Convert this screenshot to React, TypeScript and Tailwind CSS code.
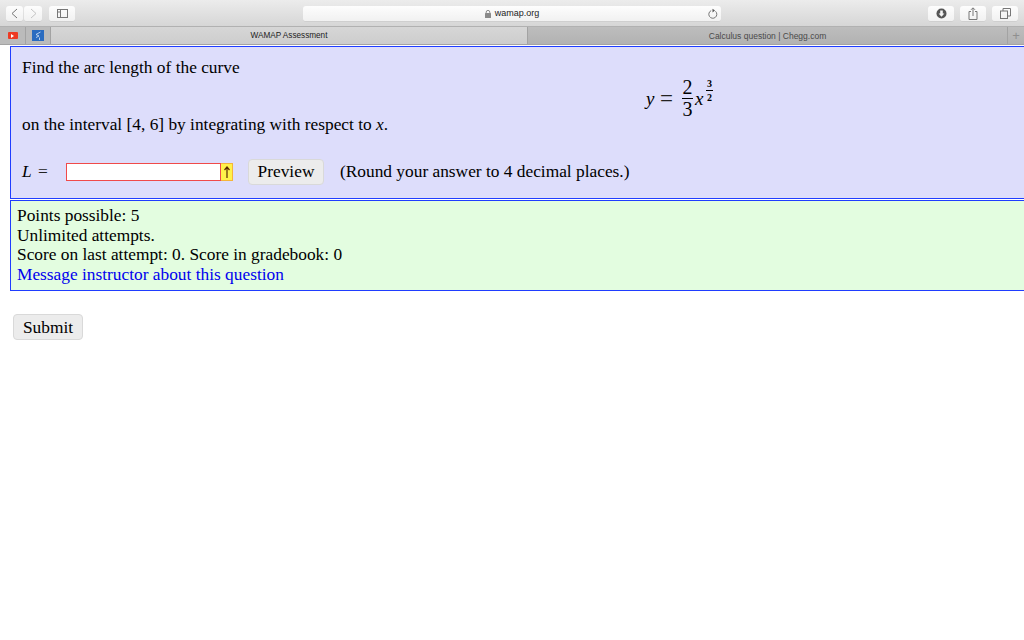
const serif = "font-['Liberation_Serif',serif]";

function NavBtn({ className = "", children }: { className?: string; children?: React.ReactNode }) {
  return (
    <div className={`h-[16px] bg-gradient-to-b from-[#fdfdfd] to-[#f1f1f1] rounded-[3px] border-b border-[#cfcfcf] flex items-center justify-center ${className}`}>
      {children}
    </div>
  );
}

function Toolbar() {
  return (
    <div className="h-[25px] pt-[1px] bg-gradient-to-b from-[#ececec] to-[#d6d6d6] border-b border-[#b1b1b1] flex items-center pl-[6px] pr-[6px] box-content">
      <div className="flex gap-px">
        <NavBtn className="w-[17px]">
          <svg width="7" height="11" viewBox="0 0 7 11" fill="none" stroke="#777" strokeWidth="1"><path d="M6 1 1 5.5 6 10" /></svg>
        </NavBtn>
        <NavBtn className="w-[18px]">
          <svg width="7" height="11" viewBox="0 0 7 11" fill="none" stroke="#c4c4c4" strokeWidth="1"><path d="M1 1 6 5.5 1 10" /></svg>
        </NavBtn>
      </div>
      <NavBtn className="w-[26px] ml-[7px]">
        <svg width="11" height="9" viewBox="0 0 11 9" fill="none" stroke="#777" strokeWidth="1"><rect x=".5" y=".5" width="10" height="8" /><path d="M3.5 .5v8M.5 3h3" /></svg>
      </NavBtn>
      <NavBtn className="w-[418px] ml-[228px] relative">
        <span className="flex items-center gap-[4px] font-['Liberation_Sans',sans-serif] text-[9px] text-[#222] pt-[2px]">
          <svg width="6" height="8" viewBox="0 0 6 8"><path d="M1.2 3.5V2.2a1.8 1.8 0 0 1 3.6 0v1.3" fill="none" stroke="#8a8a8a" /><rect y="3" width="6" height="5" rx=".5" fill="#8a8a8a" /></svg>
          wamap.org
        </span>
        <svg className="absolute right-[2px] top-[2px]" width="12" height="12" viewBox="0 0 12 12" fill="none" stroke="#777" strokeWidth="1">
          <path d="M8.5 3.3A4 4 0 1 1 4.2 2.6" />
          <path d="M5.5 .8 8 2.6 5.5 4.4z" fill="#555" stroke="none" />
        </svg>
      </NavBtn>
      <div className="flex gap-[6px] ml-auto">
        <NavBtn className="w-[26px]">
          <svg width="11" height="11" viewBox="0 0 11 11"><circle cx="5.5" cy="5.5" r="5" fill="#555" /><path d="M4.2 2.5h2.6v3h1.6L5.5 8.7 2.6 5.5h1.6z" fill="#f4f4f4" /></svg>
        </NavBtn>
        <NavBtn className="w-[26px]">
          <svg width="10" height="13" viewBox="0 0 10 13" fill="none" stroke="#777" strokeWidth="1"><path d="M3 4.5H1v8h8v-8H7M5 9V1M3 2.8 5 .8l2 2" /></svg>
        </NavBtn>
        <NavBtn className="w-[26px]">
          <svg width="11" height="11" viewBox="0 0 11 11" fill="none" stroke="#777" strokeWidth="1"><rect x=".5" y="3" width="7" height="7.5" /><path d="M3 3V.5h7.5V8H7.5" /></svg>
        </NavBtn>
      </div>
    </div>
  );
}

function TabBar() {
  return (
    <div className="h-[17px] bg-gradient-to-b from-[#bdbdbd] to-[#b2b2b2] flex border-b border-[#a3a3a3] box-content font-['Liberation_Sans',sans-serif] text-[8.2px]">
      <div className="w-[26px] bg-[#bbbbbb] border-r border-[#a3a3a3] flex items-center justify-center">
        <div className="w-[10px] h-[7px] rounded-[1px] bg-[#ee3a23] flex items-center justify-center">
          <div className="w-0 h-0 border-y-[2px] border-y-transparent border-l-[3px] border-l-white" />
        </div>
      </div>
      <div className="w-[25px] bg-[#bbbbbb] border-r border-[#a3a3a3] flex items-center justify-center">
        <div className="w-[12px] h-[11px] bg-[#2b6cc0] flex items-center justify-center">
          <svg width="8" height="9" viewBox="0 0 8 9" fill="none" stroke="#dbe8f8" strokeWidth=".8"><path d="M6.5 1 2 3.5 5 5 2 6.5M5.5 6.5V9" /></svg>
        </div>
      </div>
      <div className="w-[477px] pt-[1px] bg-gradient-to-b from-[#d6d6d6] to-[#cdcdcd] border-r border-[#a3a3a3] flex items-center justify-center text-[#222]">
        WAMAP Assessment
      </div>
      <div className="w-[479px] pt-[1px] flex items-center justify-center text-[#4a4a4a] text-[8.5px]">
        Calculus question | Chegg.com
      </div>
      <div className="flex-1 border-l border-[#a3a3a3] flex items-center justify-center text-[#8f8f8f] text-[13px] font-light leading-none">
        +
      </div>
    </div>
  );
}

function MathFormula() {
  return (
    <div className="flex items-center italic text-[19px] leading-none text-black">
      <span className="w-[14px]">y</span>
      <span className="not-italic w-[22px] text-[23px] text-[#222]">=</span>
      <span className="flex flex-col items-center not-italic text-[20px] w-[11px]">
        <span className="leading-[21px]">2</span>
        <span className="h-px w-[11px] bg-black" />
        <span className="leading-[21px]">3</span>
      </span>
      <span className="ml-[2px] w-[10px]">x</span>
      <span className="flex flex-col items-center not-italic text-[10px] font-bold ml-[1px] mb-[15px]">
        <span className="leading-[13px]">3</span>
        <span className="h-px w-[7px] bg-black" />
        <span className="leading-[13px]">2</span>
      </span>
    </div>
  );
}

export default function App() {
  return (
    <div className={`w-[1024px] h-[640px] overflow-hidden bg-white ${serif}`}>
      <Toolbar />
      <TabBar />
      <div className="ml-[10px] w-[1024px] text-black text-[17.35px] leading-[19.5px]">
        <div className="mt-[1px] h-[153px] bg-[#ddddfb] border border-[#1f3dff] px-[11px] pt-[11px]">
          <div>Find the arc length of the curve</div>
          <div className="flex pl-[624px] h-[38px] items-start -mt-[1px]">
            <MathFormula />
          </div>
          <div>
            on the interval [4, 6] by integrating with respect to <span className="italic">x</span>.
          </div>
          <div className="flex items-center mt-[25px] h-[26px]">
            <span className="italic w-[16px]">L</span>
            <span className="w-[28px] text-[#222]">=</span>
            <span className="w-[155px] h-[18px] bg-white border border-[#f04a4a]" />
            <span className="w-[12px] h-[18px] bg-[#fff24a] border border-[#f5b53a] border-l-0 flex items-center justify-center">
              <svg width="6" height="12" viewBox="0 0 6 12" fill="none" stroke="#5a2a00" strokeWidth="1.2"><path d="M3 12V1M.5 4 3 1l2.5 3" /></svg>
            </span>
            <button className="ml-[15px] w-[76px] h-[26px] bg-[#ececec] border border-[#d9d9d9] rounded-[4px]">Preview</button>
            <span className="ml-[16px]">(Round your answer to 4 decimal places.)</span>
          </div>
        </div>
        <div className="mt-px h-[91px] bg-[#e3fde0] border border-[#1f3dff] px-[6px] pt-[5px]">
          <div>Points possible: 5</div>
          <div>Unlimited attempts.</div>
          <div>Score on last attempt: 0. Score in gradebook: 0</div>
          <div className="text-[#0000ee]">Message instructor about this question</div>
        </div>
      </div>
      <button className="ml-[13px] mt-[23px] block w-[70px] h-[26px] bg-[#ececec] border border-[#d9d9d9] rounded-[4px] text-[17.35px] text-black">Submit</button>
    </div>
  );
}
